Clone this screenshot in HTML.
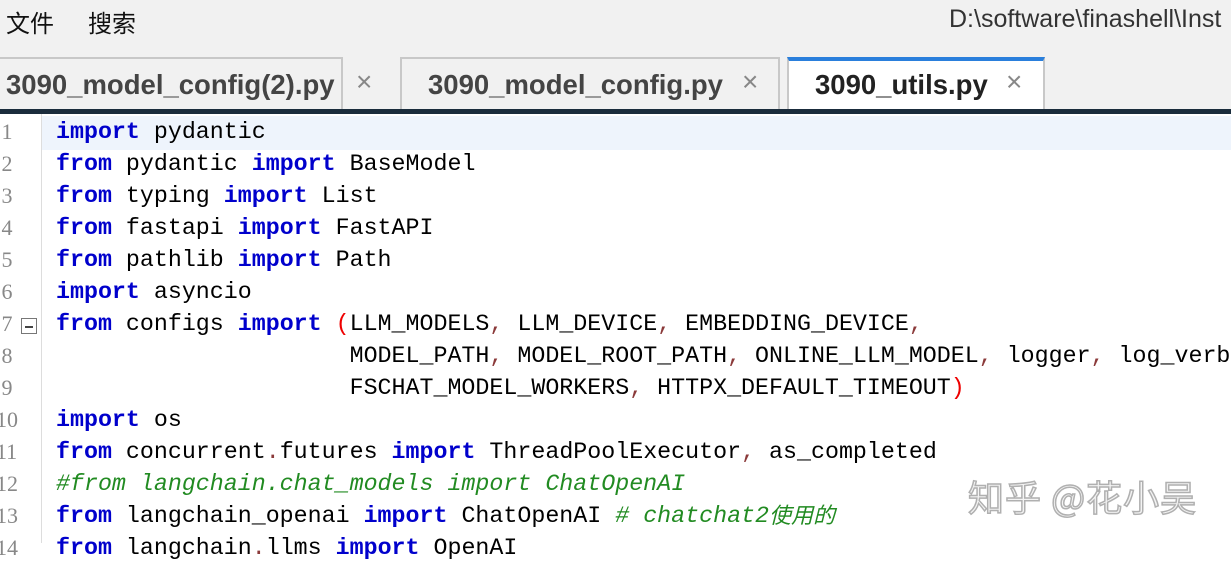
<!DOCTYPE html>
<html><head><meta charset="utf-8"><style>
*{margin:0;padding:0;box-sizing:border-box}
body{width:1231px;height:543px;overflow:hidden;background:#fff;position:relative;font-family:"Liberation Sans","Noto Sans CJK SC",sans-serif}
.top{position:absolute;left:0;top:0;width:1231px;height:110px;background:#f1f1f1}
.menu{position:absolute;top:4px;font-size:24px;color:#111}
.path{position:absolute;top:5px;left:949px;font-size:25px;color:#333;white-space:nowrap}
.tab{position:absolute;top:57px;height:52px;background:#f1f1f1;border:2px solid #c8c8c8;border-bottom:none;font-size:27.5px;font-weight:bold;color:#444;padding-left:6px;line-height:52px;white-space:nowrap}
.tab.act{background:#fff;border-top:4px solid #2a7fdc;color:#222;line-height:48px}
.bar{position:absolute;left:0;top:109px;width:1231px;height:5px;background:#1a2c3c}
.gut{position:absolute;left:0;top:114px;width:42px;height:429px;border-right:1px solid #ddd;background:#fff}
.hl{position:absolute;left:42px;top:116px;width:1189px;height:34px;background:#eef4fc}
.ln{position:absolute;left:-4px;width:40px;height:32px;line-height:28px;font-family:"Liberation Serif",serif;font-size:22px;color:#888;text-align:left}
.code{position:absolute;left:56px;height:32px;line-height:28px;font-family:"Liberation Mono",monospace;font-size:23.3px;color:#000;white-space:pre}
.k{color:#0000cc;font-weight:bold}
.p{color:#8b3a3a}
.r{color:#e00}
.c{color:#228b22;font-style:italic}
.wm{position:absolute;left:968px;top:472px;font-size:36px;line-height:48px;color:#f4f4f4;font-family:"Noto Sans CJK SC",sans-serif;-webkit-text-stroke:1.5px #b0b0b0;letter-spacing:1px}
.fold{position:absolute;left:21px;top:318px;width:16px;height:16px;border:1px solid #777;background:#fff}
.fold:after{content:"";position:absolute;left:3px;top:7px;width:8px;height:1.5px;background:#444}
</style></head><body>
<div class="top"></div>
<div class="menu" style="left:6px">文件</div>
<div class="menu" style="left:88px">搜索</div>
<div class="path">D:\software\finashell\Inst</div>
<div class="tab" style="left:-2px;width:345px">3090_model_config(2).py</div>
<div class="tab" style="left:400px;width:380px;padding-left:26px">3090_model_config.py</div>
<div class="tab act" style="left:787px;width:258px;padding-left:26px">3090_utils.py</div>
<div style="position:absolute;left:356px;top:66px;font-size:28px;color:#888">×</div>
<div style="position:absolute;left:742px;top:66px;font-size:28px;color:#888">×</div>
<div style="position:absolute;left:1006px;top:66px;font-size:28px;color:#888">×</div>
<div class="bar"></div>
<div class="gut"></div>
<div class="hl"></div>
<div class="ln" style="top:118px">&nbsp;1</div>
<div class="ln" style="top:150px">&nbsp;2</div>
<div class="ln" style="top:182px">&nbsp;3</div>
<div class="ln" style="top:214px">&nbsp;4</div>
<div class="ln" style="top:246px">&nbsp;5</div>
<div class="ln" style="top:278px">&nbsp;6</div>
<div class="ln" style="top:310px">&nbsp;7</div>
<div class="ln" style="top:342px">&nbsp;8</div>
<div class="ln" style="top:374px">&nbsp;9</div>
<div class="ln" style="top:406px">10</div>
<div class="ln" style="top:438px">11</div>
<div class="ln" style="top:470px">12</div>
<div class="ln" style="top:502px">13</div>
<div class="ln" style="top:534px">14</div>
<div class="fold"></div>
<div class="code" style="top:118px"><span class="k">import</span> pydantic</div>
<div class="code" style="top:150px"><span class="k">from</span> pydantic <span class="k">import</span> BaseModel</div>
<div class="code" style="top:182px"><span class="k">from</span> typing <span class="k">import</span> List</div>
<div class="code" style="top:214px"><span class="k">from</span> fastapi <span class="k">import</span> FastAPI</div>
<div class="code" style="top:246px"><span class="k">from</span> pathlib <span class="k">import</span> Path</div>
<div class="code" style="top:278px"><span class="k">import</span> asyncio</div>
<div class="code" style="top:310px"><span class="k">from</span> configs <span class="k">import</span> <span class="r">(</span>LLM_MODELS<span class="p">,</span> LLM_DEVICE<span class="p">,</span> EMBEDDING_DEVICE<span class="p">,</span></div>
<div class="code" style="top:342px">                     MODEL_PATH<span class="p">,</span> MODEL_ROOT_PATH<span class="p">,</span> ONLINE_LLM_MODEL<span class="p">,</span> logger<span class="p">,</span> log_verbose</div>
<div class="code" style="top:374px">                     FSCHAT_MODEL_WORKERS<span class="p">,</span> HTTPX_DEFAULT_TIMEOUT<span class="r">)</span></div>
<div class="code" style="top:406px"><span class="k">import</span> os</div>
<div class="code" style="top:438px"><span class="k">from</span> concurrent<span class="p">.</span>futures <span class="k">import</span> ThreadPoolExecutor<span class="p">,</span> as_completed</div>
<div class="code c" style="top:470px">#from langchain.chat_models import ChatOpenAI</div>
<div class="code" style="top:502px"><span class="k">from</span> langchain_openai <span class="k">import</span> ChatOpenAI <span class="c"># chatchat2<span style="font-family:'Noto Sans CJK SC',sans-serif;font-size:22px;line-height:20px;display:inline-block;vertical-align:top;height:28px;padding-top:2px">使用的</span></span></div>
<div class="code" style="top:534px"><span class="k">from</span> langchain<span class="p">.</span>llms <span class="k">import</span> OpenAI</div>
<div class="wm">知乎 @花小吴</div>
</body></html>
